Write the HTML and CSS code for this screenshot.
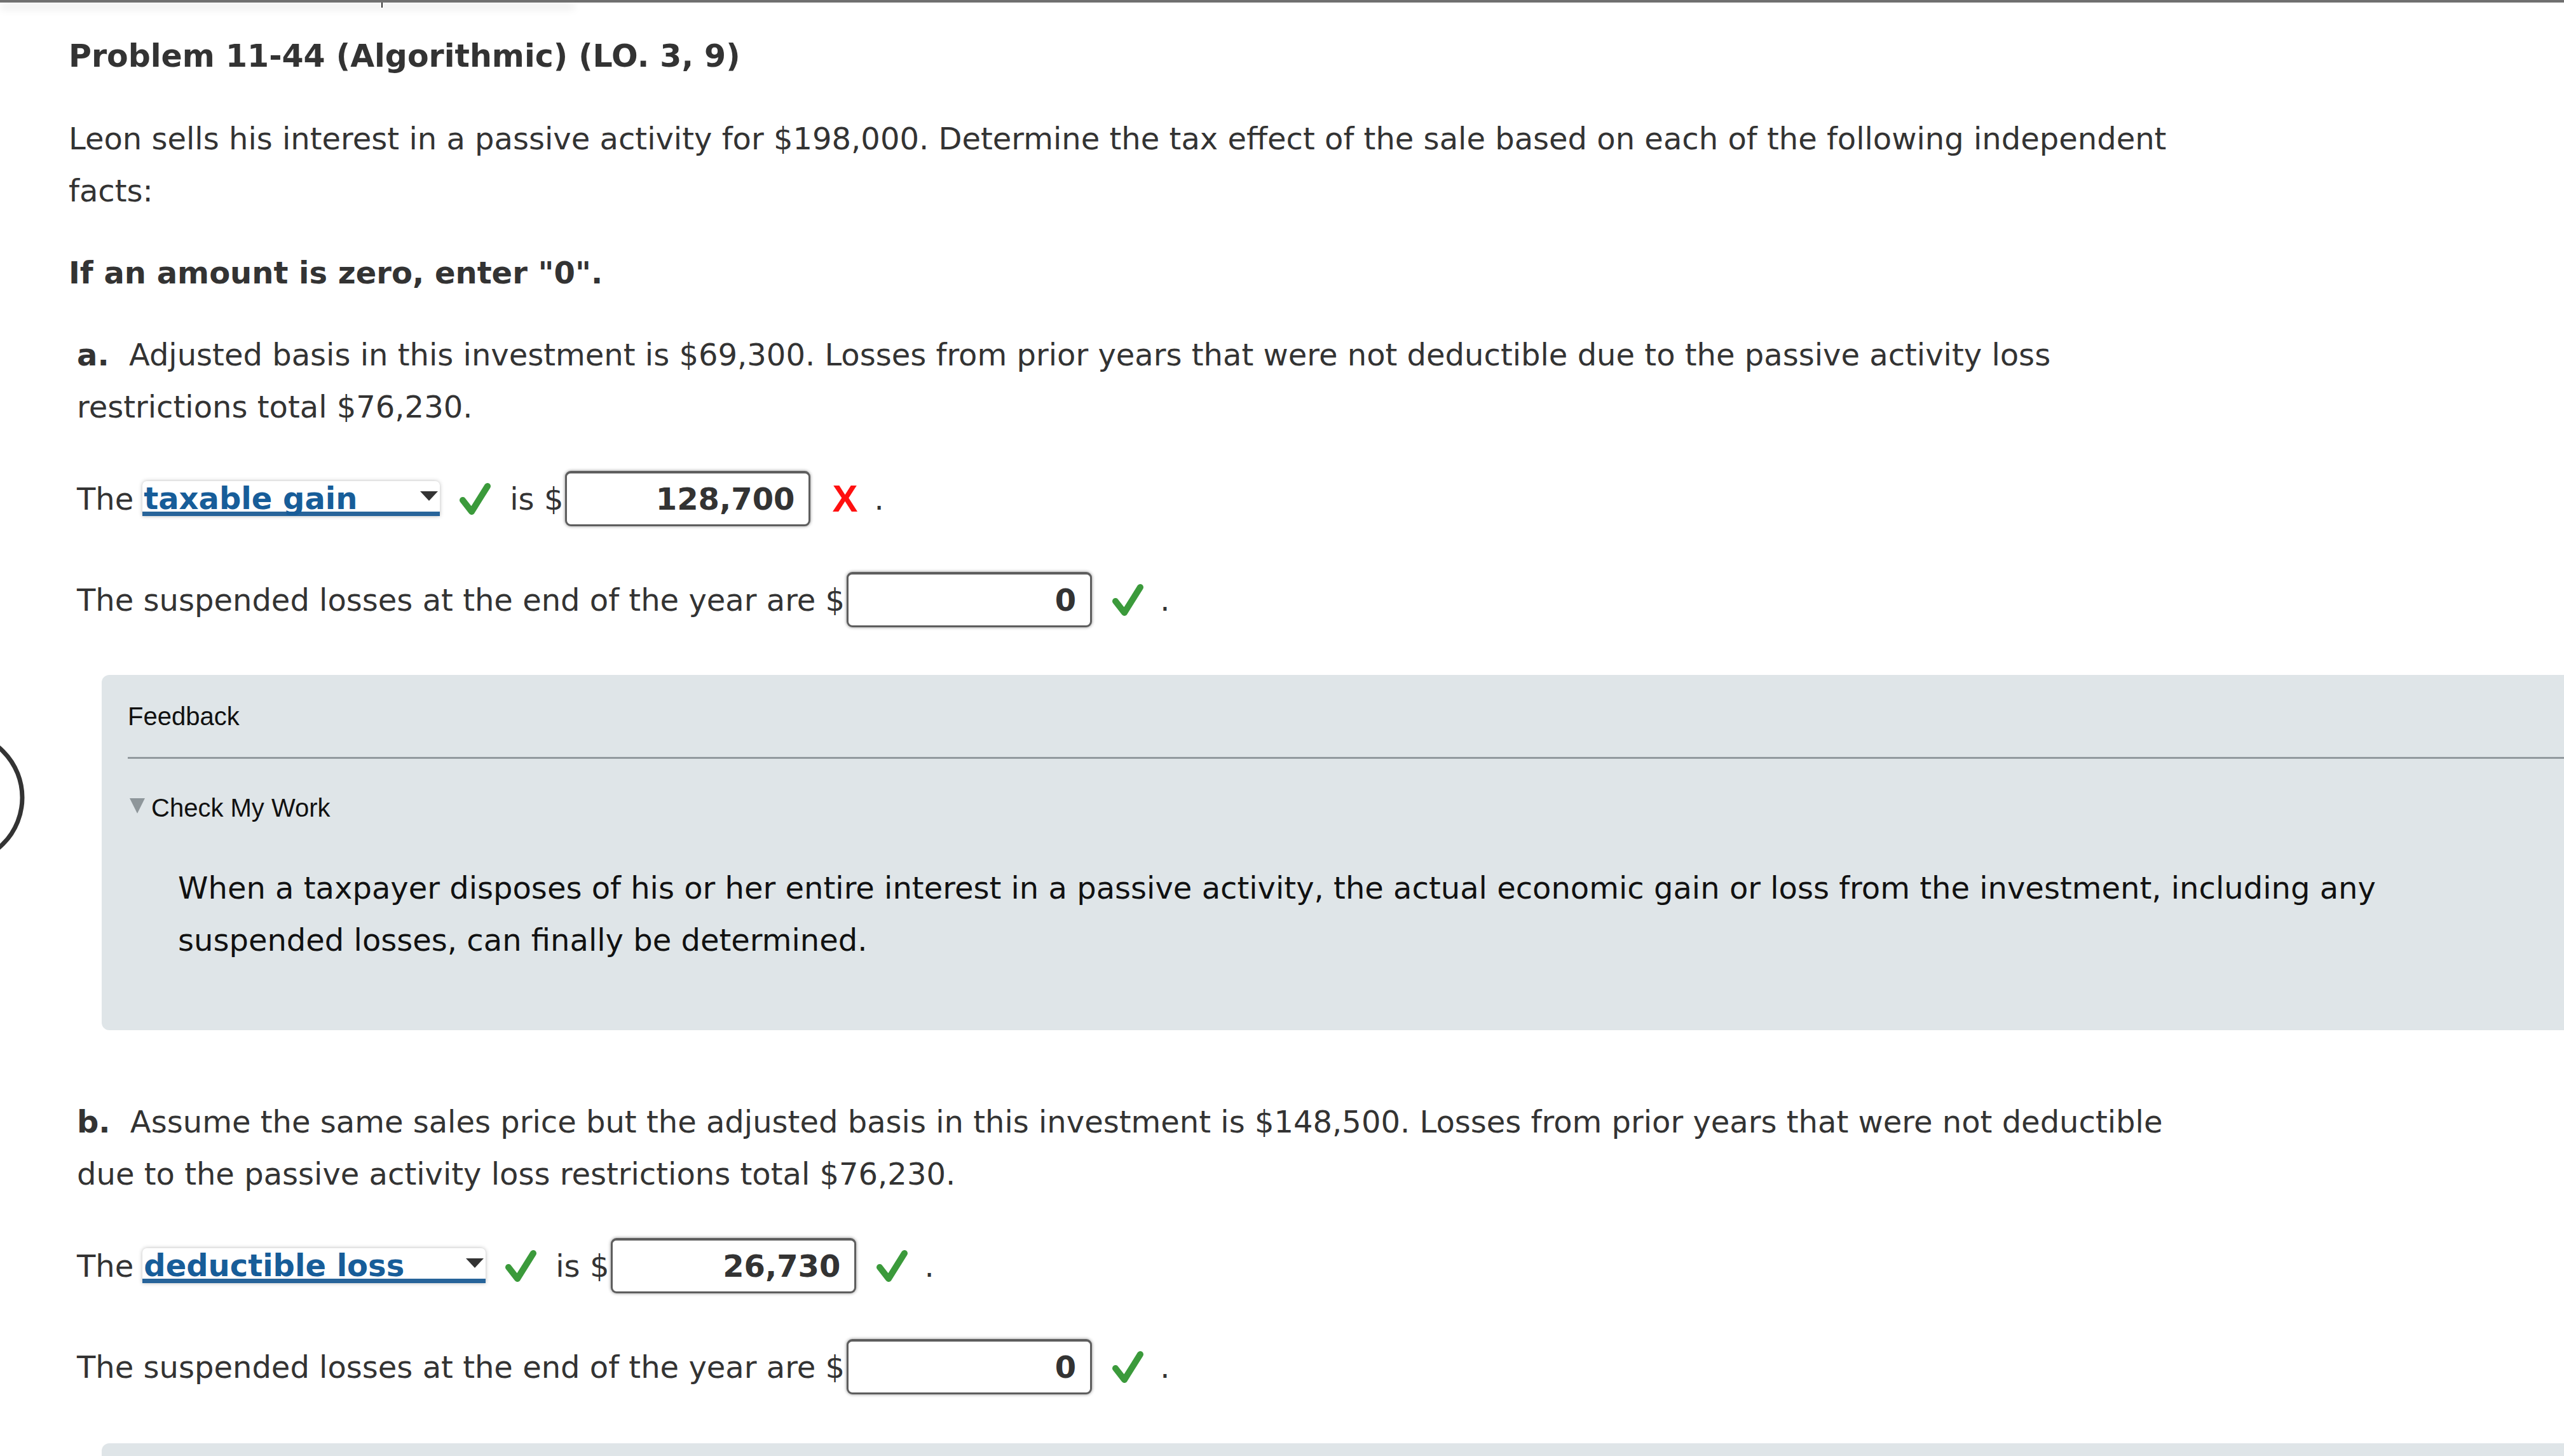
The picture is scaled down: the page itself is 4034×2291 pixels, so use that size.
FILE: index.html
```html
<!DOCTYPE html>
<html lang="en">
<head>
    <meta charset="UTF-8">
    <meta name="viewport" content="width=device-width, initial-scale=1.0">
    <title>Problem 11-44 (Algorithmic)</title>
    <link rel="stylesheet" href="styles.css">
</head>
<body>
    <div class="topbar">
        <div class="topbar-tab"></div>
        <span class="topbar-tick"></span>
    </div>

    <!-- floating control peeking in from the left edge -->
    <svg class="side-ring" width="40" height="210" viewBox="0 0 40 210">
        <circle cx="-68" cy="105" r="103" fill="none" stroke="#333" stroke-width="7"/>
    </svg>

    <main class="problem">
        <h1 class="problem-title">Problem 11-44 (Algorithmic) (LO. 3, 9)</h1>

        <p class="text">Leon sells his interest in a passive activity for $198,000. Determine the tax effect of the sale based on each of the following independent facts:</p>

        <p class="text note">If an amount is zero, enter "0".</p>

        <section class="part">
            <p class="text"><b class="part-label">a.</b> Adjusted basis in this investment is $69,300. Losses from prior years that were not deductible due to the passive activity loss restrictions total $76,230.</p>

            <div class="answer-row row-first">
                <span class="lead">The</span>
                <span class="select select-a"><span class="select-value">taxable gain</span><span class="select-arrow"></span></span>
                <svg class="mark mark-after-select" width="49" height="51" viewBox="0 0 49 51"><polyline points="5,28 19,46 44,6" fill="none" stroke="#3b9a3b" stroke-width="10" stroke-linecap="round" stroke-linejoin="round"/></svg>
                <span>is $</span>
                <span class="amount">128,700</span>
                <span class="wrong">X</span>
                <span class="dot">.</span>
            </div>

            <div class="answer-row">
                <span>The suspended losses at the end of the year are $</span>
                <span class="amount">0</span>
                <svg class="mark" width="49" height="51" viewBox="0 0 49 51"><polyline points="5,28 19,46 44,6" fill="none" stroke="#3b9a3b" stroke-width="10" stroke-linecap="round" stroke-linejoin="round"/></svg>
                <span class="dot">.</span>
            </div>
        </section>

        <div class="feedback">
            <div class="feedback-title">Feedback</div>
            <hr class="feedback-rule">
            <div class="check-work"><span class="check-arrow"></span>Check My Work</div>
            <p class="feedback-text">When a taxpayer disposes of his or her entire interest in a passive activity, the actual economic gain or loss from the investment, including any suspended losses, can finally be determined.</p>
        </div>

        <section class="part part-b">
            <p class="text"><b class="part-label">b.</b> Assume the same sales price but the adjusted basis in this investment is $148,500. Losses from prior years that were not deductible due to the passive activity loss restrictions total $76,230.</p>

            <div class="answer-row row-first">
                <span class="lead">The</span>
                <span class="select select-b"><span class="select-value">deductible loss</span><span class="select-arrow"></span></span>
                <svg class="mark mark-after-select" width="49" height="51" viewBox="0 0 49 51"><polyline points="5,28 19,46 44,6" fill="none" stroke="#3b9a3b" stroke-width="10" stroke-linecap="round" stroke-linejoin="round"/></svg>
                <span>is $</span>
                <span class="amount">26,730</span>
                <svg class="mark" width="49" height="51" viewBox="0 0 49 51"><polyline points="5,28 19,46 44,6" fill="none" stroke="#3b9a3b" stroke-width="10" stroke-linecap="round" stroke-linejoin="round"/></svg>
                <span class="dot">.</span>
            </div>

            <div class="answer-row">
                <span>The suspended losses at the end of the year are $</span>
                <span class="amount">0</span>
                <svg class="mark" width="49" height="51" viewBox="0 0 49 51"><polyline points="5,28 19,46 44,6" fill="none" stroke="#3b9a3b" stroke-width="10" stroke-linecap="round" stroke-linejoin="round"/></svg>
                <span class="dot">.</span>
            </div>
        </section>

        <div class="feedback feedback-next"></div>
    </main>
</body>
</html>
```

FILE: styles.css
```css
* {
    box-sizing: border-box;
}

html, body {
    margin: 0;
    padding: 0;
}

body {
    width: 4034px;
    height: 2291px;
    overflow: hidden;
    position: relative;
    font-family: "DejaVu Sans", Verdana, sans-serif;
    font-size: 48px;
    color: #333;
    background-color: #fff;
}

/* strip left over from the toolbar above */
.topbar {
    position: relative;
    height: 4px;
    background-color: #707070;
}

.topbar-tab {
    width: 904px;
    height: 4px;
    box-shadow: 0 8px 14px rgba(0, 0, 0, 0.18);
}

.topbar-tick {
    position: absolute;
    left: 600px;
    top: 4px;
    width: 2px;
    height: 8px;
    background-color: #333;
}

.side-ring {
    position: absolute;
    left: 0;
    top: 1150px;
}

.problem {
    padding-left: 108px;
    width: 3475px;
}

.problem-title {
    margin: 44px 0 0;
    font-size: 49px;
    line-height: 82px;
    font-weight: bold;
    color: #333;
}

.text {
    margin: 47px 0 0;
    line-height: 82px;
}

.note {
    font-weight: bold;
}

.part {
    padding-left: 13px;
}

.part-label {
    margin-right: 16px;
}

.answer-row {
    display: flex;
    align-items: center;
    height: 87px;
    margin-top: 72px;
    white-space: nowrap;
}

.answer-row.row-first {
    margin-top: 60px;
}

.lead {
    margin-right: 14px;
}

.select {
    display: flex;
    align-items: center;
    justify-content: space-between;
    height: 55px;
    padding: 6px 3px 0 2px;
    margin-right: 31px;
    background-color: #fff;
    border-bottom: 7px solid #27649a;
    border-radius: 7px 7px 0 0;
    box-shadow: 0 0 6px rgba(0, 0, 0, 0.28);
}

.select-a {
    width: 468px;
}

.select-b {
    width: 540px;
}

.select-value {
    font-weight: bold;
    color: #175d99;
}

.select-arrow {
    width: 0;
    height: 0;
    margin-bottom: 8px;
    border-left: 14px solid transparent;
    border-right: 14px solid transparent;
    border-top: 15px solid #333;
}

.mark {
    flex-shrink: 0;
    margin-left: 32px;
}

.mark-after-select {
    margin-left: 0;
    margin-right: 30px;
}

.amount {
    width: 386px;
    height: 87px;
    margin-left: 3px;
    padding-right: 22px;
    display: flex;
    align-items: center;
    justify-content: flex-end;
    font-weight: bold;
    color: #333;
    background-color: #fff;
    border: 3px solid #5e5e5e;
    border-top-width: 4px;
    border-radius: 9px;
    box-shadow: 0 0 5px rgba(0, 0, 0, 0.45);
}

.wrong {
    margin-left: 34px;
    font-family: "Liberation Sans", Arial, sans-serif;
    font-size: 60px;
    font-weight: bold;
    color: #ff1010;
}

.dot {
    margin-left: 26px;
}

.feedback {
    width: 4000px;
    margin: 75px 0 0 52px;
    padding: 42px 0 101px 41px;
    background-color: #dfe5e8;
    border-radius: 12px 0 0 12px;
    color: #111;
}

.feedback-title,
.check-work {
    font-family: "Liberation Sans", Arial, sans-serif;
    font-size: 40px;
    line-height: 46px;
}

.feedback-rule {
    margin: 41px 0 0;
    height: 3px;
    border: none;
    background-color: #929a9e;
}

.check-work {
    display: flex;
    align-items: center;
    margin-top: 54px;
}

.check-arrow {
    width: 0;
    height: 0;
    margin: 0 10px 6px 3px;
    border-left: 12px solid transparent;
    border-right: 12px solid transparent;
    border-top: 24px solid #8e969a;
}

.feedback-text {
    width: 3600px;
    margin: 62px 0 0 79px;
    line-height: 82px;
    color: #111;
}

.part-b {
    margin-top: 103px;
}

.part-b .text {
    margin-top: 0;
}

.feedback-next {
    margin-top: 77px;
    height: 200px;
    padding: 0;
}
```
